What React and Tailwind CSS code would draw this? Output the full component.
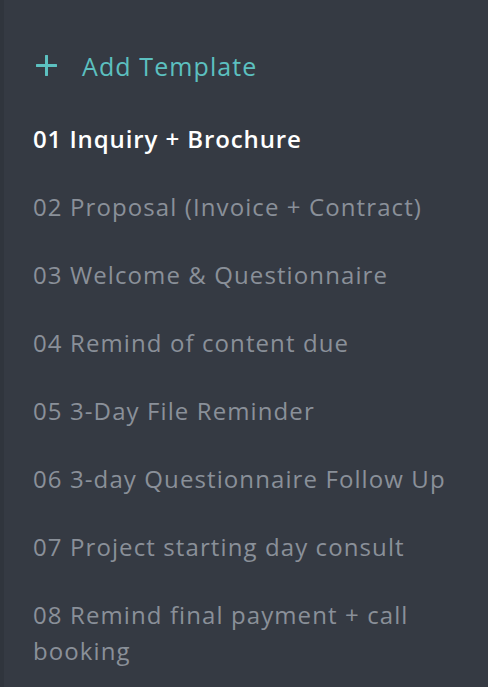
const TEMPLATES = [
  '02 Proposal (Invoice + Contract)',
  '03 Welcome & Questionnaire',
  '04 Remind of content due',
  '05 3-Day File Reminder',
  '06 3-day Questionnaire Follow Up',
  '07 Project starting day consult',
  '08 Remind final payment + call booking',
];

export default function App() {
  return (
    <div className="min-h-screen w-full bg-[#353a43] flex" style={{ fontFamily: '"Open Sans", Lato, sans-serif' }}>
      {/* left edge shade */}
      <div className="w-[4px] bg-[#30353d]" />
      <div className="flex-1 pl-[29px] pr-4 pt-[49px] pb-8">
        <button className="flex items-center h-[36px] text-[#5cc0c0]">
          <svg width="21" height="21" viewBox="0 0 21 21" className="ml-[3px] mr-[25px] -mt-[4px]">
            <path d="M10.5 1v19M1 10.5h19" stroke="currentColor" strokeWidth="3" strokeLinecap="round" />
          </svg>
          <span className="text-[25px] font-medium tracking-[1.1px]">Add Template</span>
        </button>

        <ul className="mt-[36px] flex flex-col gap-[32px]">
          <li className="text-[24px] leading-[36px] font-semibold tracking-[0.9px] text-white">01 Inquiry + Brochure</li>
          {TEMPLATES.map((t) => (
            <li key={t} className="text-[24px] leading-[36px] tracking-[1.1px] text-[#8a9099] max-w-[432px]">
              {t}
            </li>
          ))}
        </ul>
      </div>
    </div>
  );
}
